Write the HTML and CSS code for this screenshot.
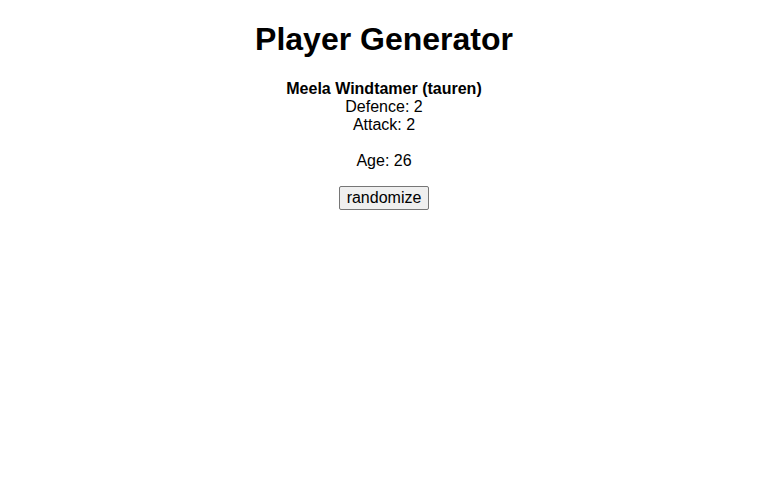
FILE: index.html
```html
<!DOCTYPE html>
<html lang="en">
<head>
    <meta charset="UTF-8">
    <meta name="viewport" content="width=device-width, initial-scale=1.0">
    <title>Player Generator</title>
    <link rel="stylesheet" href="styles.css">
</head>
<body>
    <div class="app">
        <h1 class="title">Player Generator</h1>

        <div class="player">
            <div class="player-name">Meela Windtamer (tauren)</div>
            <div>Defence: 2</div>
            <div>Attack: 2</div>
            <br>
            <div>Age: 26</div>
        </div>

        <div class="actions">
            <button type="button" class="btn">randomize</button>
        </div>
    </div>
</body>
</html>
```

FILE: styles.css
```css
body {
    margin: 0;
    font-family: "Liberation Sans", Arial, sans-serif;
    font-size: 16px;
    color: #000;
    background: #fff;
}

.app {
    text-align: center;
    padding: 0 8px;
}

.title {
    font-size: 32px;
    font-weight: bold;
    margin: 21.44px 0;
}

.player-name {
    font-weight: bold;
}

.actions {
    margin: 16px 0;
}

.btn {
    font-family: inherit;
    font-size: 16px;
    color: #000;
    background: #efefef;
    border: 1px solid #767676;
    border-radius: 2px;
    padding: 2px 7px;
    cursor: pointer;
}

.btn:hover {
    background: #e5e5e5;
}
```
